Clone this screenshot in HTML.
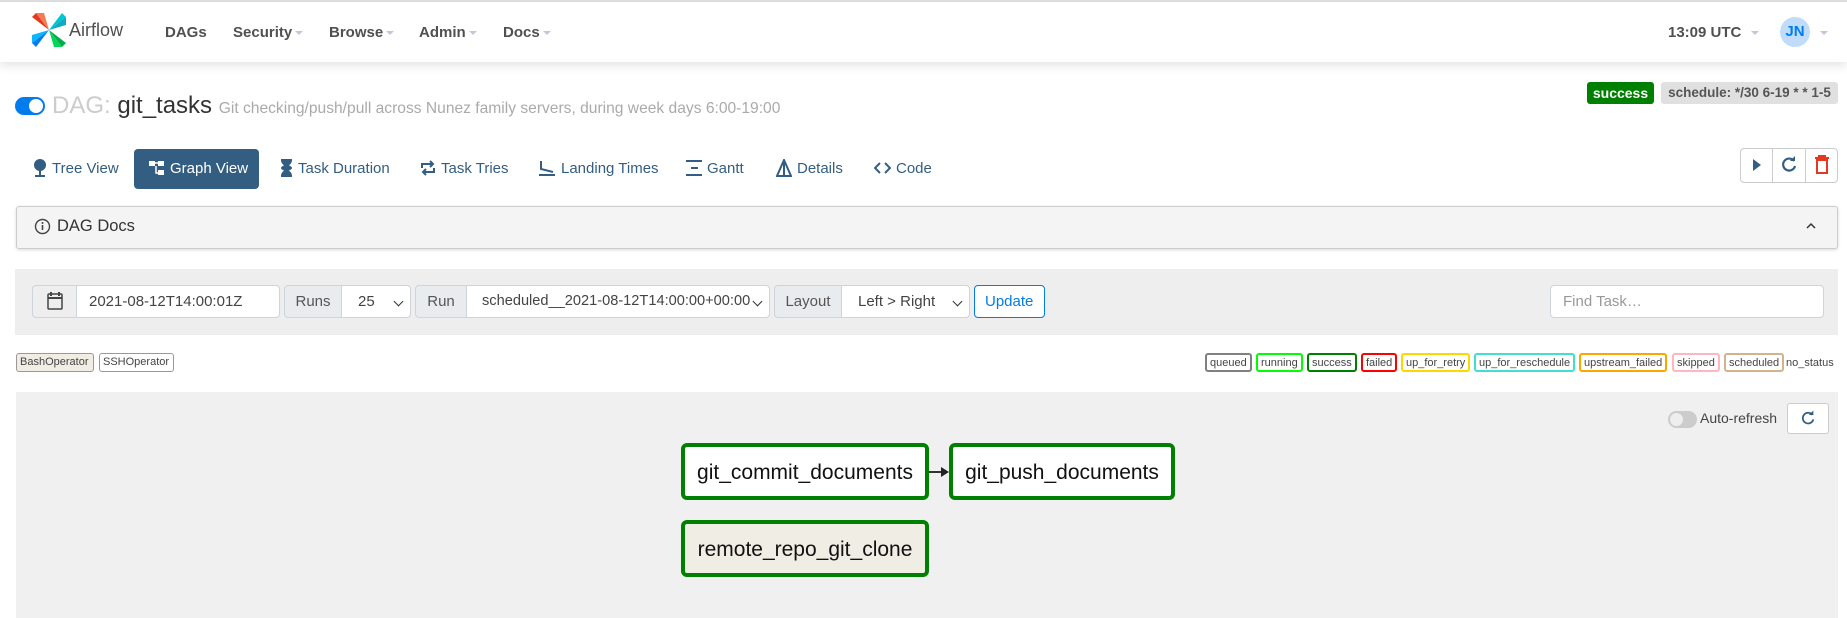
<!DOCTYPE html>
<html><head><meta charset="utf-8"><style>
*{box-sizing:border-box;margin:0;padding:0}
body{width:1847px;height:618px;overflow:hidden;background:#fff;font-family:"Liberation Sans",sans-serif;color:#51504f;position:relative}
.a{position:absolute}
.nav{left:0;top:0;width:1847px;height:62px;border-top:2px solid #ddd;background:#fff;box-shadow:0 3px 10px rgba(0,0,0,.12)}
.ni{position:absolute;top:24px;font-size:15px;font-weight:bold;color:#51504f}
.car{display:inline-block;width:0;height:0;border-left:4px solid transparent;border-right:4px solid transparent;border-top:4px solid #ccc3d8;margin-left:3px;vertical-align:middle}
.tab{position:absolute;top:149px;height:40px;line-height:40px;font-size:15px;color:#335e82}
.tab svg{vertical-align:middle;margin-right:5px;margin-top:-3px}
.addon{position:absolute;top:285px;height:33px;line-height:31px;background:#e9ecef;border:1px solid #ced4da;font-size:15px;color:#555;text-align:center}
.inp{position:absolute;top:285px;height:33px;line-height:31px;background:#fff;border:1px solid #ced4da;font-size:15px;color:#444;padding-left:12px;white-space:nowrap;overflow:hidden}
.sel:after{content:"";position:absolute;right:8px;top:12px;width:6px;height:6px;border-right:1.5px solid #333;border-bottom:1.5px solid #333;transform:rotate(45deg)}
.lg{position:absolute;top:353px;height:19px;line-height:16px;font-size:11px;border:2px solid;border-radius:3px;padding:0 3px;color:#444;background:#fff}
.node{position:absolute;border:4px solid #008000;border-radius:6px;font-size:21px;color:#111;text-align:center;line-height:52px;background:#fff}
</style></head><body>
<div class="a nav"></div>
<svg class="a" style="left:30px;top:11px" width="38" height="38" viewBox="0 0 38 38">
<path d="M19 19 L6 2 L2 6 Z" fill="#e43921"/><path d="M19 19 L6 2 L14 2 Z" fill="#f37c55"/>
<path d="M19 19 L36 6 L32 2 Z" fill="#00c7d4"/><path d="M19 19 L36 6 L36 14 Z" fill="#11a9c4"/>
<path d="M19 19 L32 36 L36 32 Z" fill="#00ad46"/><path d="M19 19 L32 36 L24 36 Z" fill="#04d659"/>
<path d="M19 19 L2 32 L6 36 Z" fill="#017cee"/><path d="M19 19 L2 32 L2 24 Z" fill="#0cb6ff"/>
</svg>
<div class="a" style="left:69px;top:20px;font-size:18px;color:#51504f">Airflow</div>
<div class="ni" style="left:165px">DAGs</div>
<div class="ni" style="left:233px">Security<span class="car"></span></div>
<div class="ni" style="left:329px">Browse<span class="car"></span></div>
<div class="ni" style="left:419px">Admin<span class="car"></span></div>
<div class="ni" style="left:503px">Docs<span class="car"></span></div>
<div class="ni" style="left:1668px">13:09 UTC<span class="car" style="margin-left:10px"></span></div>
<div class="a" style="left:1780px;top:17px;width:30px;height:30px;border-radius:50%;background:#bfdcfb;color:#017cee;font-size:15px;font-weight:bold;text-align:center;line-height:30px">JN</div>
<span class="car a" style="left:1817px;top:31px"></span>

<div class="a" style="left:15px;top:97px;width:30px;height:18px;border-radius:9px;background:#017cee"><div class="a" style="left:14px;top:2px;width:14px;height:14px;border-radius:50%;background:#fff"></div></div>
<div class="a" style="left:52px;top:92px;font-size:24px;color:#ccc">DAG: <span style="color:#333">git_tasks</span> <span style="font-size:15.6px;color:#aaa">Git checking/push/pull across Nunez family servers, during week days 6:00-19:00</span></div>
<div class="a" style="left:1587px;top:82px;width:67px;height:22px;background:#008000;color:#fff;font-weight:bold;font-size:14px;text-align:center;line-height:22px;border-radius:3px">success</div>
<div class="a" style="left:1661px;top:82px;width:177px;height:22px;background:#e0e0e0;color:#555;font-weight:bold;font-size:13.5px;text-align:center;line-height:22px;border-radius:3px">schedule: */30 6-19 * * 1-5</div>

<div class="tab" style="left:33px"><svg width="14" height="18" viewBox="0 0 14 18"><circle cx="7" cy="6" r="6" fill="#335e82"/><path d="M7 11v5M2 17h10" stroke="#335e82" stroke-width="2"/></svg>Tree View</div>
<div class="tab" style="left:134px;width:125px;background:#335e82;color:#fff;border-radius:4px;padding-left:15px"><svg width="16" height="16" viewBox="0 0 16 16"><rect x="0" y="1" width="6" height="5" fill="#fff"/><rect x="9" y="1" width="6" height="5" fill="#fff"/><rect x="9" y="10" width="6" height="5" fill="#fff"/><path d="M6 3h3M7 6v7h2" stroke="#fff" stroke-width="1.5" fill="none"/></svg>Graph View</div>
<div class="tab" style="left:280px"><svg width="13" height="18" viewBox="0 0 13 18"><path d="M1 1h11M1 17h11M2 1c0 6 9 6 9 8s-9 2-9 8h9c0-6-9-6-9-8s9-2 9-8" stroke="#335e82" stroke-width="2" fill="#335e82"/></svg>Task Duration</div>
<div class="tab" style="left:420px"><svg width="16" height="16" viewBox="0 0 16 16"><path d="M2 8V4h11M10 1l3 3-3 3M14 8v4H3M6 9l-3 3 3 3" stroke="#335e82" stroke-width="2" fill="none"/></svg>Task Tries</div>
<div class="tab" style="left:538px"><svg width="18" height="18" viewBox="0 0 18 18"><path d="M1 16h16M3 2v8l12 3" stroke="#335e82" stroke-width="2" fill="none"/></svg>Landing Times</div>
<div class="tab" style="left:686px"><svg width="16" height="18" viewBox="0 0 16 18"><path d="M0 2h16M0 16h16M5 9h7" stroke="#335e82" stroke-width="2"/></svg>Gantt</div>
<div class="tab" style="left:776px"><svg width="16" height="18" viewBox="0 0 16 18"><path d="M8 1L1 17h14ZM8 1v16" stroke="#335e82" stroke-width="2" fill="none"/></svg>Details</div>
<div class="tab" style="left:874px"><svg width="17" height="14" viewBox="0 0 17 14"><path d="M6 2L1 7l5 5M11 2l5 5-5 5" stroke="#335e82" stroke-width="2" fill="none"/></svg>Code</div>

<div class="a" style="left:1740px;top:148px;width:98px;height:35px;border:1px solid #ccc;border-radius:4px;background:#fff"></div>
<div class="a" style="left:1772px;top:149px;width:1px;height:33px;background:#ccc"></div>
<div class="a" style="left:1805px;top:149px;width:1px;height:33px;background:#ccc"></div>
<svg class="a" style="left:1751px;top:157px" width="12" height="16"><path d="M2 2l8 6-8 6Z" fill="#335e82"/></svg>
<svg class="a" style="left:1780px;top:156px" width="18" height="18" viewBox="0 0 18 18"><path d="M14 5A6 6 0 1 0 15 10" stroke="#335e82" stroke-width="2.2" fill="none"/><path d="M10 5h5V0" fill="#335e82"/></svg>
<svg class="a" style="left:1814px;top:155px" width="16" height="20" viewBox="0 0 16 20"><path d="M1 3h14M5 3V1h6v2" stroke="#e43921" stroke-width="2" fill="none"/><rect x="3" y="5" width="10" height="13" stroke="#e43921" stroke-width="2" fill="none"/></svg>

<div class="a" style="left:16px;top:206px;width:1822px;height:43px;background:#f4f4f4;border:1px solid #ccc;border-radius:3px;box-shadow:0 1px 3px rgba(0,0,0,.15)"></div>
<svg class="a" style="left:34px;top:218px" width="17" height="17"><circle cx="8.5" cy="8.5" r="7" stroke="#444" stroke-width="1.4" fill="none"/><path d="M8.5 7v5" stroke="#444" stroke-width="1.6"/><circle cx="8.5" cy="5" r="1" fill="#444"/></svg>
<div class="a" style="left:57px;top:217px;font-size:16.5px;color:#333">DAG Docs</div>
<svg class="a" style="left:1805px;top:221px" width="12" height="10"><path d="M2 7l4-4 4 4" stroke="#333" stroke-width="1.5" fill="none"/></svg>

<div class="a" style="left:15px;top:269px;width:1823px;height:66px;background:#eee"></div>
<div class="addon" style="left:32px;width:45px;border-radius:4px 0 0 4px;background:#eee"><svg width="16" height="19" viewBox="0 0 16 19" style="vertical-align:middle;margin-top:-3px"><rect x="1" y="3" width="14" height="15" rx="1" stroke="#444" stroke-width="1.5" fill="none"/><path d="M1 7h14M4 1v4M12 1v4" stroke="#444" stroke-width="2"/></svg></div>
<div class="inp" style="left:76px;width:204px;border-radius:0 4px 4px 0">2021-08-12T14:00:01Z</div>
<div class="addon" style="left:284px;width:58px;border-radius:4px 0 0 4px">Runs</div>
<div class="inp sel" style="left:341px;width:70px;border-radius:0 4px 4px 0;padding-left:16px">25</div>
<div class="addon" style="left:415px;width:52px;border-radius:4px 0 0 4px">Run</div>
<div class="inp sel" style="left:466px;width:304px;border-radius:0 4px 4px 0;padding-left:15px;font-size:14.6px">scheduled__2021-08-12T14:00:00+00:00</div>
<div class="addon" style="left:774px;width:68px;border-radius:4px 0 0 4px">Layout</div>
<div class="inp sel" style="left:841px;width:129px;border-radius:0 4px 4px 0;padding-left:16px">Left &gt; Right</div>
<div class="inp" style="left:974px;width:71px;border:1px solid #017cee;color:#017cee;border-radius:4px;padding-left:10px">Update</div>
<div class="inp" style="left:1550px;width:274px;border-radius:4px;color:#999">Find Task…</div>

<div class="lg" style="left:16px;width:78px;border-width:1px;border-color:#999;background:#f0ede4;line-height:17px">BashOperator</div>
<div class="lg" style="left:99px;width:75px;border-width:1px;border-color:#999;line-height:17px">SSHOperator</div>
<div class="lg" style="left:1205px;border-color:#808080">queued</div>
<div class="lg" style="left:1256px;border-color:#00ff00">running</div>
<div class="lg" style="left:1307px;border-color:#008000">success</div>
<div class="lg" style="left:1361px;border-color:#ff0000">failed</div>
<div class="lg" style="left:1401px;border-color:#ffd700">up_for_retry</div>
<div class="lg" style="left:1474px;border-color:#40e0d0">up_for_reschedule</div>
<div class="lg" style="left:1579px;border-color:#ffa500">upstream_failed</div>
<div class="lg" style="left:1672px;border-color:#ffb6c1">skipped</div>
<div class="lg" style="left:1724px;border-color:#d2b48c">scheduled</div>
<div class="lg" style="left:1784px;border-color:transparent;background:transparent;padding:0">no_status</div>

<div class="a" style="left:16px;top:392px;width:1822px;height:226px;background:#f0f0f0"></div>
<div class="a" style="left:1668px;top:411px;width:29px;height:17px;border-radius:9px;background:#ccc"><div class="a" style="left:2px;top:2px;width:13px;height:13px;border-radius:50%;background:#eee"></div></div>
<div class="a" style="left:1700px;top:410px;font-size:14px;color:#444">Auto-refresh</div>
<div class="a" style="left:1787px;top:403px;width:42px;height:31px;background:#fff;border:1px solid #ccc;border-radius:3px"></div>
<svg class="a" style="left:1800px;top:410px" width="16" height="17" viewBox="0 0 18 18"><path d="M14 5A6 6 0 1 0 15 10" stroke="#335e82" stroke-width="2" fill="none"/><path d="M10 5h5V0" fill="#335e82"/></svg>

<div class="node" style="left:681px;top:443px;width:248px;height:57px">git_commit_documents</div>
<div class="node" style="left:949px;top:443px;width:226px;height:57px">git_push_documents</div>
<div class="node" style="left:681px;top:520px;width:248px;height:57px;background:#f0ede4">remote_repo_git_clone</div>
<div class="a" style="left:929px;top:471px;width:14px;height:1.5px;background:#333"></div>
<svg class="a" style="left:941px;top:466px" width="9" height="12"><path d="M0 1l8 5-8 5Z" fill="#222"/></svg>
</body></html>
